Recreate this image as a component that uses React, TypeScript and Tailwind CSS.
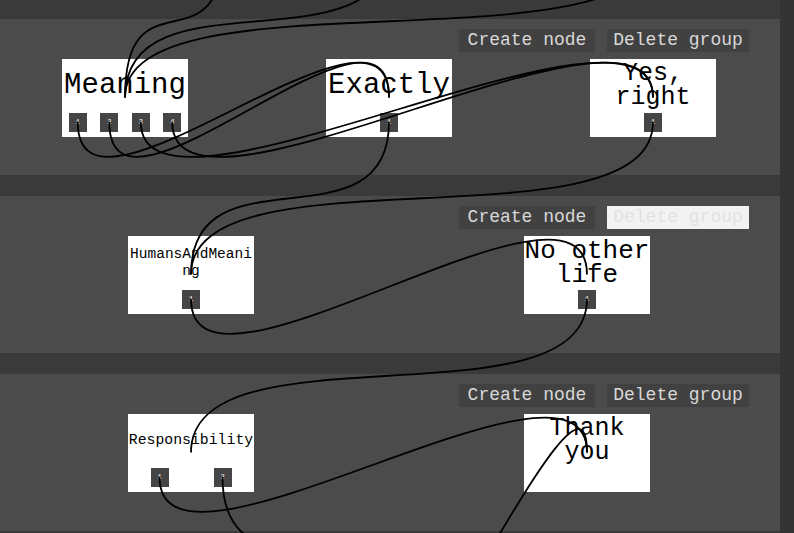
import React from "react";

type NodeDef = {
  label: string;
  ports: number;
  text: string; // tailwind classes for the label
};

type GroupDef = {
  nodes: NodeDef[];
  rowClass: string;
  canDelete: boolean;
  height: string;
};

const GROUPS: GroupDef[] = [
  {
    rowClass: "pl-[62px] gap-[138px]",
    canDelete: true,
    height: "h-[156px]",
    nodes: [
      { label: "Meaning", ports: 4, text: "text-[29px] leading-none" },
      { label: "Exactly", ports: 1, text: "text-[29px] leading-none" },
      { label: "Yes, right", ports: 1, text: "text-[25px] leading-[24px]" },
    ],
  },
  {
    rowClass: "pl-[128px] gap-[270px]",
    canDelete: false,
    height: "h-[157px]",
    nodes: [
      { label: "HumansAndMeaning", ports: 1, text: "text-[14.5px] leading-[17px] break-all text-[#333]" },
      { label: "No other life", ports: 1, text: "text-[26px] leading-[24px]" },
    ],
  },
  {
    rowClass: "pl-[128px] gap-[270px]",
    canDelete: true,
    height: "h-[157px]",
    nodes: [
      { label: "Responsibility", ports: 2, text: "text-[14.8px] leading-[17px] text-[#333]" },
      { label: "Thank you", ports: 0, text: "text-[25px] leading-[24px]" },
    ],
  },
];

// wires: output port -> input (node centre), cubic with vertical handles
const D = 130;
const WIRES: [number, number, number, number][] = [
  // from the group above (scrolled off)
  [223, -55, 125, 97.5],
  [389, -55, 125, 97.5],
  [653, -55, 125, 97.5],
  // group 1
  [77.75, 122, 389, 97.5],
  [109.25, 122, 389, 97.5],
  [140.75, 122, 653, 97.5],
  [172.25, 122, 653, 97.5],
  [389, 122, 191, 274.5],
  [653, 122, 191, 274.5],
  // group 2
  [191, 299, 587, 274.5],
  [587, 299, 191, 452.5],
  // group 3 and the one below
  [159.5, 477, 587, 452.5],
  [222.5, 477, 389, 629.5],
  [389, 654, 587, 452.5],
];

function wirePath([x1, y1, x2, y2]: [number, number, number, number]) {
  return `M ${x1} ${y1} C ${x1} ${y1 + D}, ${x2} ${y2 - D}, ${x2} ${y2}`;
}

function Node({ node }: { node: NodeDef }) {
  return (
    <div className="w-[126px] h-[78px] bg-white flex flex-col flex-shrink-0">
      <div className="h-[54px] flex items-center justify-center overflow-hidden">
        <p className={`text-center text-black w-full ${node.text}`}>{node.label}</p>
      </div>
      <div className="h-[19px] flex justify-around items-center">
        {Array.from({ length: node.ports }).map((_, i) => (
          <div
            key={i}
            className="w-[18px] h-[19px] bg-[#454545] flex items-center justify-center text-[7px] leading-none text-white"
          >
            {i + 1}
          </div>
        ))}
      </div>
    </div>
  );
}

export default function App() {
  return (
    <div
      className="relative w-[794px] h-[533px] overflow-hidden bg-[#3a3a3a] flex"
      style={{ fontFamily: '"Liberation Mono", "DejaVu Sans Mono", monospace' }}
    >
      <div className="w-[780px] flex flex-col gap-[21px] pt-[19px]">
        {GROUPS.map((g, gi) => (
          <div key={gi} className={`${g.height} bg-[#4b4b4b] flex flex-col flex-shrink-0 pt-[9.5px]`}>
            <div className="flex justify-end gap-[12px] pr-[31px]">
              <button className="w-[136px] h-[23px] bg-[#414141] text-[#d8d8d8] text-[18px] leading-none flex items-center justify-center">
                Create node
              </button>
              <button
                className={`w-[142px] h-[23px] text-[18px] leading-none flex items-center justify-center ${
                  g.canDelete ? "bg-[#414141] text-[#d8d8d8]" : "bg-[#f2f2f2] text-[#e2e2e2]"
                }`}
              >
                Delete group
              </button>
            </div>
            <div className={`flex mt-[7px] ${g.rowClass}`}>
              {g.nodes.map((n) => (
                <Node key={n.label} node={n} />
              ))}
            </div>
          </div>
        ))}
      </div>
      <div className="flex-1 bg-[#343434]" />

      <svg className="absolute inset-0 pointer-events-none" width={794} height={533} viewBox="0 0 794 533">
        {WIRES.map((w, i) => (
          <path key={i} d={wirePath(w)} fill="none" stroke="#000" strokeWidth={1.8} />
        ))}
      </svg>
    </div>
  );
}
